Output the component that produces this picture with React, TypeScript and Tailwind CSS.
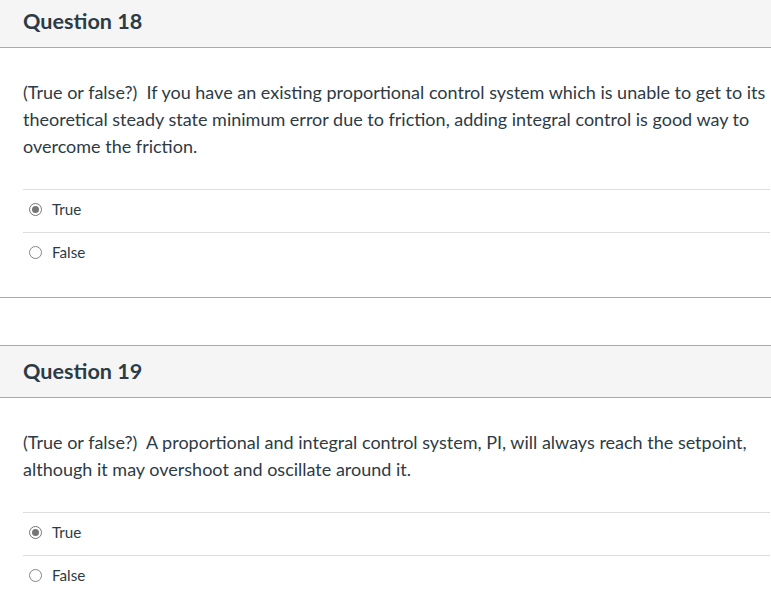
import React from "react";

type Question = {
  number: number;
  text: string;
  answers: { label: string; checked: boolean }[];
};

const QUESTIONS: Question[] = [
  {
    number: 18,
    text: "(True or false?)\u00a0 If you have an existing proportional control system which is unable to get to its theoretical steady state minimum error due to friction, adding integral control is good way to overcome the friction.",
    answers: [
      { label: "True", checked: true },
      { label: "False", checked: false },
    ],
  },
  {
    number: 19,
    text: "(True or false?)\u00a0 A proportional and integral control system, PI, will always reach the setpoint, although it may overshoot and oscillate around it.",
    answers: [
      { label: "True", checked: true },
      { label: "False", checked: false },
    ],
  },
];

function Radio({ checked }: { checked: boolean }) {
  return (
    <span
      className={
        checked
          ? "flex size-[13px] shrink-0 items-center justify-center rounded-full border border-[#767676] bg-white"
          : "flex size-[13px] shrink-0 items-center justify-center rounded-full border border-[#858585] bg-white"
      }
    >
      {checked && <span className="size-[7px] rounded-full bg-[#767676]" />}
    </span>
  );
}

function QuestionCard({ q }: { q: Question }) {
  return (
    <div className="border-y border-[#aaaaaa] bg-white">
      <div className="flex h-[52px] items-center border-b border-[#aaaaaa] bg-[#f5f5f5] px-[23px]">
        <h2 className="text-[21.6px] font-bold text-[#2d3b45]">Question {q.number}</h2>
      </div>
      <div className="pl-[23px] pr-[1px] pt-[31px]">
        <p className="text-[18px] leading-[27px] text-[#2d3b45]">{q.text}</p>
        <div className="mt-[29px] pb-[22px]">
          {q.answers.map((a) => (
            <div
              key={a.label}
              className="flex items-center gap-[10px] border-t border-[#dddddd] pl-[6px] pb-[12px] pt-[8px]"
            >
              <Radio checked={a.checked} />
              <span className="text-[15.2px] leading-[22px] text-[#2d3b45]">{a.label}</span>
            </div>
          ))}
        </div>
      </div>
    </div>
  );
}

export default function App() {
  return (
    <div className="-mt-[5px] h-[594px] overflow-hidden bg-white font-['Lato',sans-serif]">
      <div className="flex flex-col gap-[47px]">
        {QUESTIONS.map((q) => (
          <QuestionCard key={q.number} q={q} />
        ))}
      </div>
    </div>
  );
}
